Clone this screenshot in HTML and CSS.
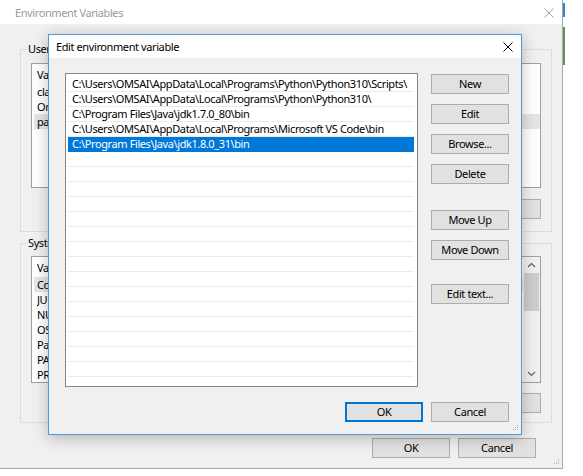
FILE: index.html
```html
<!DOCTYPE html>
<html>
<head>
<meta charset="utf-8">
<title>Environment Variables</title>
<link rel="stylesheet" href="styles.css">
</head>
<body>
<div class="desktop-edge"><span class="edge-blue"></span><span class="edge-green"></span></div>

<div class="win-env">
  <div class="env-title">
    <span class="env-title-text">Environment Variables</span>
    <svg class="env-close" width="10" height="10" viewBox="0 0 10 10"><path d="M0.5 0.5L9.5 9.5M9.5 0.5L0.5 9.5" stroke="#a0a0a0" stroke-width="1"/></svg>
  </div>
  <div class="env-body">
    <div class="group group-user">
      <span class="legend">User variables for OMSAI</span>
      <div class="lv lv-user">
        <div class="lv-head"><span class="c1">Variable</span></div>
        <div class="lv-row"><span class="c1">classpath</span></div>
        <div class="lv-row"><span class="c1">OneDrive</span></div>
        <div class="lv-row sel-grey"><span class="c1">path</span></div>
      </div>
      <div class="group-buttons">
        <button class="btn">New...</button><button class="btn">Edit...</button><button class="btn">Delete</button>
      </div>
    </div>
    <div class="group group-sys">
      <span class="legend">System variables</span>
      <div class="lv lv-sys">
        <div class="lv-inner">
          <div class="lv-head"><span class="c1">Variable</span></div>
          <div class="lv-row sel-grey"><span class="c1">ComSpec</span></div>
          <div class="lv-row"><span class="c1">JUNIT_HOME</span></div>
          <div class="lv-row"><span class="c1">NUMBER_OF_PROCESSORS</span></div>
          <div class="lv-row"><span class="c1">OS</span></div>
          <div class="lv-row"><span class="c1">Path</span></div>
          <div class="lv-row"><span class="c1">PATHEXT</span></div>
          <div class="lv-row"><span class="c1">PROCESSOR_ARCHITECTURE</span></div>
        </div>
        <div class="vscroll">
          <svg class="arr" width="9" height="6" viewBox="0 0 9 6"><path d="M1 5L4.5 1.5L8 5" fill="none" stroke="#606060" stroke-width="1.2"/></svg>
          <div class="track"><div class="thumb"></div></div>
          <svg class="arr" width="9" height="6" viewBox="0 0 9 6"><path d="M1 1L4.5 4.5L8 1" fill="none" stroke="#606060" stroke-width="1.2"/></svg>
        </div>
      </div>
      <div class="group-buttons">
        <button class="btn">New...</button><button class="btn">Edit...</button><button class="btn">Delete</button>
      </div>
    </div>
    <div class="env-footer">
      <button class="btn">OK</button><button class="btn">Cancel</button>
    </div>
  </div>
  <svg class="grip grip-env" width="7" height="7" viewBox="0 0 7 7"><g fill="#b8b8b8"><rect x="5" y="0" width="1" height="1"/><rect x="3" y="2" width="1" height="1"/><rect x="5" y="2" width="1" height="1"/><rect x="1" y="4" width="1" height="1"/><rect x="3" y="4" width="1" height="1"/><rect x="5" y="4" width="1" height="1"/></g></svg>
</div>

<div class="win-edit">
  <div class="edit-title">
    <span class="edit-title-text">Edit environment variable</span>
    <svg class="edit-close" width="10" height="10" viewBox="0 0 10 10"><path d="M0.5 0.5L9.5 9.5M9.5 0.5L0.5 9.5" stroke="#000" stroke-width="1"/></svg>
  </div>
  <div class="edit-body">
    <div class="path-list">
      <div class="p-row">C:\Users\OMSAI\AppData\Local\Programs\Python\Python310\Scripts\</div>
      <div class="p-row">C:\Users\OMSAI\AppData\Local\Programs\Python\Python310\</div>
      <div class="p-row">C:\Program Files\Java\jdk1.7.0_80\bin</div>
      <div class="p-row">C:\Users\OMSAI\AppData\Local\Programs\Microsoft VS Code\bin</div>
      <div class="p-row selected">C:\Program Files\Java\jdk1.8.0_31\bin</div>
      <div class="p-row"></div><div class="p-row"></div><div class="p-row"></div><div class="p-row"></div>
      <div class="p-row"></div><div class="p-row"></div><div class="p-row"></div><div class="p-row"></div>
      <div class="p-row"></div><div class="p-row"></div><div class="p-row"></div><div class="p-row"></div>
      <div class="p-row"></div><div class="p-row"></div><div class="p-row"></div><div class="p-row"></div>
    </div>
    <div class="side-buttons">
      <button class="btn">New</button>
      <button class="btn">Edit</button>
      <button class="btn">Browse...</button>
      <button class="btn">Delete</button>
      <button class="btn gap-move">Move Up</button>
      <button class="btn">Move Down</button>
      <button class="btn gap-text">Edit text...</button>
    </div>
    <div class="edit-footer">
      <button class="btn btn-default">OK</button><button class="btn">Cancel</button>
    </div>
  </div>
  <svg class="grip grip-edit" width="7" height="7" viewBox="0 0 7 7"><g fill="#b8b8b8"><rect x="5" y="0" width="1" height="1"/><rect x="3" y="2" width="1" height="1"/><rect x="5" y="2" width="1" height="1"/><rect x="1" y="4" width="1" height="1"/><rect x="3" y="4" width="1" height="1"/><rect x="5" y="4" width="1" height="1"/></g></svg>
</div>
</body>
</html>
```

FILE: styles.css
```css
* { box-sizing: border-box; }

html, body {
  margin: 0;
  padding: 0;
}

body {
  position: relative;
  width: 583px;
  height: 476px;
  overflow: hidden;
  background: #ffffff;
  font-family: "Noto Sans", "Segoe UI", sans-serif;
  font-size: 11px;
  letter-spacing: -0.4px;
  color: #000;
}

/* desktop behind the window */
.desktop-edge {
  position: absolute;
  left: 563px;
  top: 0;
  width: 2px;
  height: 70px;
  display: flex;
  flex-direction: column;
}
.edge-blue { display: block; height: 14px; margin-top: 3px; background: #3f7fc4; }
.edge-green { display: block; height: 38px; margin-top: 10px; background: #5b9a55; }

/* buttons */
.btn {
  display: block;
  width: 78px;
  height: 20px;
  padding: 0;
  margin: 0;
  border: 1px solid #adadad;
  background: #e1e1e1;
  font-family: inherit;
  font-size: inherit;
  letter-spacing: inherit;
  color: #000;
  line-height: 18px;
  text-align: center;
}

/* ---------- back window ---------- */
.win-env {
  position: absolute;
  left: 0;
  top: 0;
  width: 563px;
  height: 469px;
  background: #f0f0f0;
  border-right: 1px solid #a8a8a8;
  border-bottom: 1px solid #a8a8a8;
  display: flex;
  flex-direction: column;
}

.env-title {
  height: 24px;
  background: #ffffff;
  display: flex;
  align-items: center;
  padding-left: 15px;
  padding-right: 8px;
  color: #9a9a9a;
}
.env-close { margin-left: auto; margin-top: 1px; }

.env-body {
  padding: 25px 10px 0 20px;
  display: flex;
  flex-direction: column;
}

.group {
  position: relative;
  width: 532px;
  border: 1px solid #dcdcdc;
  padding: 13px 10px 12px 10px;
  display: flex;
  flex-direction: column;
}
.group-sys {
  margin-top: 11px;
  padding-top: 12px;
  padding-bottom: 9px;
}

.legend {
  position: absolute;
  left: 5px;
  top: -8px;
  padding: 0 2px;
  background: #f0f0f0;
  line-height: 14px;
  white-space: nowrap;
}

.lv {
  background: #fff;
  border: 1px solid #a0a0a0;
  overflow: hidden;
}
.lv-user { height: 125px; }
.lv-sys {
  height: 127px;
  display: flex;
}
.lv-inner { flex: 1; }

.lv-head {
  height: 20px;
  display: flex;
  align-items: center;
  padding-left: 5px;
}
.lv-row {
  height: 15px;
  display: flex;
  align-items: center;
  margin-left: 2px;
  padding-left: 3px;
  white-space: nowrap;
}
.c1 { width: 170px; overflow: hidden; }
.sel-grey { background: #e5e5e5; }

.vscroll {
  width: 17px;
  background: #f0f0f0;
  display: flex;
  flex-direction: column;
  align-items: center;
}
.arr { margin: 5px 0 5px; }
.track {
  flex: 1;
  width: 100%;
  padding: 0 1px;
}
.thumb {
  height: 38px;
  background: #cdcdcd;
}

.group-buttons {
  display: flex;
  justify-content: flex-end;
  gap: 8px;
  margin-top: 11px;
}
.group-sys .group-buttons { margin-top: 10px; }

.env-footer {
  display: flex;
  justify-content: flex-end;
  gap: 8px;
  margin-top: 15px;
  padding-right: 16px;
}

.grip { position: absolute; }
.grip-env { right: 2px; bottom: 2px; }
.grip-edit { right: 2px; bottom: 2px; }

/* ---------- front dialog ---------- */
.win-edit {
  position: absolute;
  left: 48px;
  top: 34px;
  width: 474px;
  height: 401px;
  background: #f0f0f0;
  border: 1px solid #4b9be0;
  box-shadow: 0 3px 14px rgba(0, 0, 0, 0.25);
}

.edit-title {
  height: 23px;
  background: #ffffff;
  display: flex;
  align-items: center;
  padding-left: 7px;
  padding-right: 8px;
}
.edit-close { margin-left: auto; margin-top: 1px; }

.edit-body {
  display: grid;
  grid-template-columns: 353px 78px;
  column-gap: 13px;
  padding: 15px 12px 0 16px;
}

.path-list {
  height: 314px;
  background: #fff;
  border: 1px solid #828790;
  padding: 3px 3px 0 2px;
  overflow: hidden;
}
.p-row {
  height: 15px;
  line-height: 14px;
  padding-left: 4px;
  border-bottom: 1px solid #ebebeb;
  white-space: nowrap;
}
.p-row.selected {
  background: #0078d7;
  color: #fff;
  border-bottom-color: #0078d7;
}

.side-buttons {
  display: flex;
  flex-direction: column;
  gap: 10px;
  padding-top: 1px;
}
.gap-move { margin-top: 16px; }
.gap-text { margin-top: 14px; }

.edit-footer {
  grid-column: 1 / span 2;
  display: flex;
  justify-content: flex-end;
  gap: 8px;
  margin-top: 15px;
}
.btn-default {
  border-color: #0078d7;
  box-shadow: inset 0 0 0 1px #0078d7;
}
```
